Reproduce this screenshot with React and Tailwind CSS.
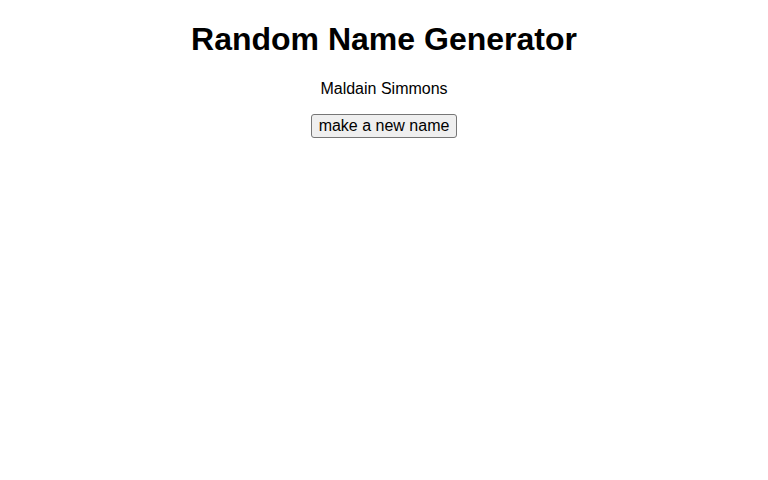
export default function App() {
  return (
    <div className="flex flex-col items-center bg-white text-black" style={{ fontFamily: '"Liberation Sans", Arial, sans-serif' }}>
      <h1 className="mt-[21.44px] text-[32px] font-bold leading-[37px]">Random Name Generator</h1>
      <p className="mt-[21.44px] text-base leading-[18px]">Maldain Simmons</p>
      <button className="mt-4 px-[7px] pt-[1px] pb-[2px] text-base leading-[19px] bg-[#efefef] border border-[#767676] rounded-[3px]">
        make a new name
      </button>
    </div>
  );
}
